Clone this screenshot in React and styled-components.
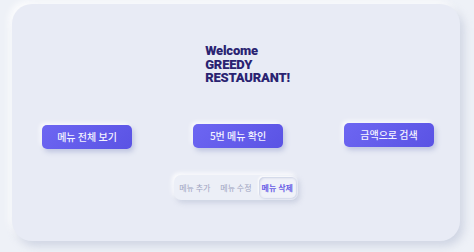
import React from "react";
import styled, { createGlobalStyle } from "styled-components";

const Global = createGlobalStyle`
  html, body { margin: 0; padding: 0; background: #eef1f7; }
  body { font-family: "Noto Sans", "Noto Sans CJK KR", sans-serif; }
  #root { width: 474px; height: 252px; overflow: hidden; }
`;

const Page = styled.div`
  width: 474px;
  height: 252px;
  padding: 4px 14px 11px 12px;
  box-sizing: border-box;
  display: flex;
`;

const Card = styled.div`
  flex: 1;
  border-radius: 20px;
  background: #e8ebf5;
  box-shadow: 4px 5px 9px rgba(170, 180, 205, 0.45), -3px -3px 7px rgba(255, 255, 255, 0.9);
  display: flex;
  flex-direction: column;
  align-items: center;
  padding-top: 40px;
  box-sizing: border-box;
`;

const Title = styled.h1`
  margin: 0 0 0 23px;
  font-family: "Roboto", "Inter", sans-serif;
  font-weight: 900;
  font-size: 13px;
  line-height: 13.5px;
  color: #2a2371;
  letter-spacing: -0.2px;
`;

const ButtonRow = styled.div`
  margin-top: 38px;
  display: flex;
  gap: 61px;
  align-items: flex-start;
  margin-left: 4px;
`;

const ActionButton = styled.button`
  width: 90px;
  height: 24px;
  border: none;
  border-radius: 5px;
  background: linear-gradient(135deg, #6d66f2 0%, #5a53e4 100%);
  color: #f4f3ff;
  font-family: "Noto Sans CJK KR", "Noto Sans", sans-serif;
  font-size: 10px;
  font-weight: 500;
  box-shadow: 2px 3px 5px rgba(140, 150, 200, 0.45), -2px -2px 4px rgba(255, 255, 255, 0.9);
  margin-top: ${(p) => p.$drop}px;
  padding: 0;
`;

const Tabs = styled.div`
  margin-top: 26px;
  display: flex;
  align-items: center;
  gap: 4px;
  padding: 2px;
  border-radius: 7px;
  background: #eceff7;
  box-shadow: 2px 3px 5px rgba(170, 180, 205, 0.45), -2px -2px 4px rgba(255, 255, 255, 0.95);
`;

const Tab = styled.div`
  height: 21px;
  padding: 0 3px;
  display: flex;
  align-items: center;
  border-radius: 5px;
  font-family: "Noto Sans CJK KR", "Noto Sans", sans-serif;
  font-size: 8px;
  font-weight: ${(p) => (p.$active ? 600 : 400)};
  color: ${(p) => (p.$active ? "#6a60e6" : "#a0a4c1")};
  background: ${(p) => (p.$active ? "#f0f2f9" : "transparent")};
  box-shadow: ${(p) =>
    p.$active
      ? "inset 1px 1px 2px rgba(170,180,210,0.5), 1px 1px 2px rgba(170,180,210,0.4), -1px -1px 2px rgba(255,255,255,0.9)"
      : "none"};
`;

export default function App() {
  return (
    <>
      <Global />
      <Page>
        <Card>
          <Title>
            Welcome
            <br />
            GREEDY
            <br />
            RESTAURANT!
          </Title>
          <ButtonRow>
            <ActionButton $drop={2}>메뉴 전체 보기</ActionButton>
            <ActionButton $drop={1}>5번 메뉴 확인</ActionButton>
            <ActionButton $drop={0}>금액으로 검색</ActionButton>
          </ButtonRow>
          <Tabs>
            <Tab>메뉴 추가</Tab>
            <Tab>메뉴 수정</Tab>
            <Tab $active>메뉴 삭제</Tab>
          </Tabs>
        </Card>
      </Page>
    </>
  );
}
